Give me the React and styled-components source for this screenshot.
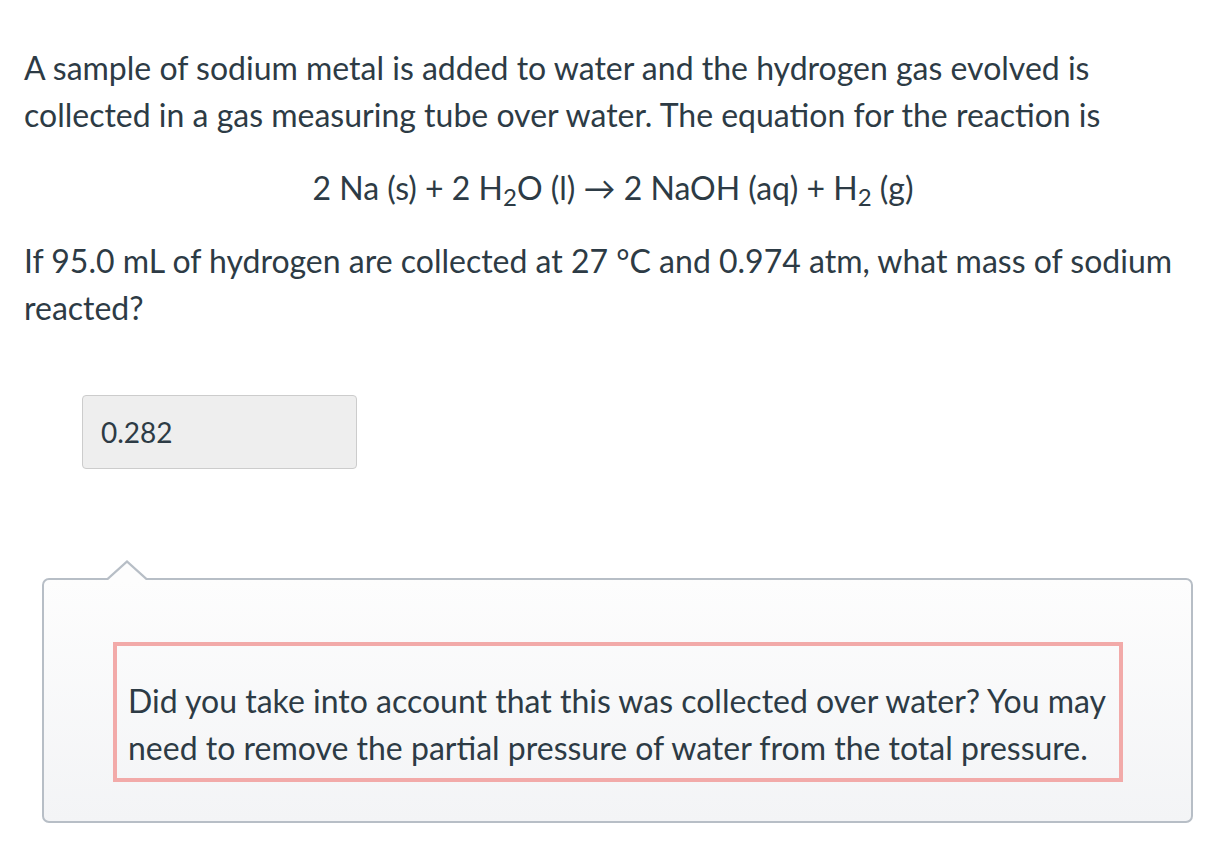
import React from "react";
import styled, { createGlobalStyle } from "styled-components";

const GlobalStyle = createGlobalStyle`
  body {
    margin: 0;
    background: #ffffff;
    font-family: Lato, "Open Sans", sans-serif;
    color: #2d3b45;
  }
`;

const Page = styled.div`
  padding: 44px 24px 0 24px;
  width: 1226px;
  box-sizing: border-box;
`;

const Para = styled.p`
  margin: 0;
  font-size: 32px;
  line-height: 47px;
`;

const Equation = styled.p`
  margin: 26px 0 26px 0;
  font-size: 32px;
  line-height: 47px;
  text-align: center;
  sub {
    font-size: 0.75em;
    line-height: 0;
    vertical-align: -0.25em;
  }
`;

const AnswerRow = styled.div`
  padding: 64px 0 0 58px;
`;

const AnswerBox = styled.div`
  width: 275px;
  height: 74px;
  box-sizing: border-box;
  background: #eeeeee;
  border: 1px solid #cccccc;
  border-radius: 4px;
  padding: 0 18px;
  display: flex;
  align-items: center;
  font-size: 28px;
`;

const Callout = styled.div`
  position: relative;
  margin: 109px 9px 0 18px;
  border: 2px solid #b7bec6;
  border-radius: 7px;
  background: linear-gradient(to bottom, #fdfdfd, #f3f4f6);
  padding: 62px 68px 39px 69px;

  &::before,
  &::after {
    content: "";
    position: absolute;
    left: 63px;
    width: 0;
    height: 0;
    border-left: 20px solid transparent;
    border-right: 20px solid transparent;
  }
  &::before {
    top: -20px;
    border-bottom: 18px solid #b7bec6;
  }
  &::after {
    top: -17px;
    border-bottom: 18px solid #fdfdfd;
  }
`;

const Comment = styled.div`
  border: 4px solid #f2aaa9;
  padding: 31px 2px 7px 11px;
  font-size: 32px;
  line-height: 47px;
  white-space: nowrap;
`;

export default function App() {
  return (
    <>
      <GlobalStyle />
      <Page>
        <Para>
          A sample of sodium metal is added to water and the hydrogen gas evolved is
          <br />
          collected in a gas measuring tube over water. The equation for the reaction is
        </Para>
        <Equation>
          2 Na (s) + 2 H<sub>2</sub>O (l) → 2 NaOH (aq) + H<sub>2</sub> (g)
        </Equation>
        <Para>
          If 95.0 mL of hydrogen are collected at 27 °C and 0.974 atm, what mass of sodium
          <br />
          reacted?
        </Para>
        <AnswerRow>
          <AnswerBox>0.282</AnswerBox>
        </AnswerRow>
        <Callout>
          <Comment>
            Did you take into account that this was collected over water? You may
            <br />
            need to remove the partial pressure of water from the total pressure.
          </Comment>
        </Callout>
      </Page>
    </>
  );
}
